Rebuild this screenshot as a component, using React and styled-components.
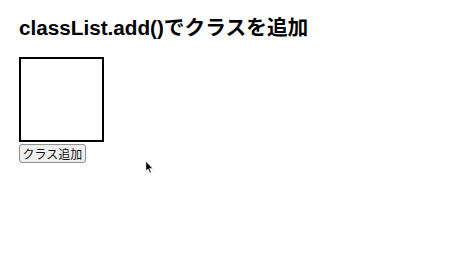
import React from 'react';
import styled, { createGlobalStyle } from 'styled-components';

const Global = createGlobalStyle`
  html, body {
    margin: 0;
    background: #fff;
  }
  body {
    font-family: "Liberation Sans", "Noto Sans CJK JP", sans-serif;
    color: #000;
  }
`;

const Page = styled.div`
  position: relative;
  width: 474px;
  height: 279px;
  padding: 15px 19px;
  box-sizing: border-box;
`;

const Title = styled.h1`
  margin: 0 0 16px;
  font-size: 20.7px;
  line-height: 26px;
  font-weight: 700;
`;

const Box = styled.div`
  width: 81px;
  height: 81px;
  border: 2px solid #000;
  margin-bottom: 2px;
`;

const Button = styled.button`
  display: block;
  box-sizing: border-box;
  width: 67px;
  height: 19px;
  padding: 0;
  font-family: "Noto Sans CJK JP", sans-serif;
  font-size: 12px;
  line-height: 17px;
  color: #111;
  background: #efefef;
  border: 1px solid #8f8f8f;
  border-radius: 3px;
`;

const Cursor = styled.svg`
  position: absolute;
  left: 145px;
  top: 160px;
`;

export default function App() {
  return (
    <Page>
      <Global />
      <Title>classList.add()でクラスを追加</Title>
      <Box />
      <Button>クラス追加</Button>
      <Cursor width="9" height="15" viewBox="0 0 10 16">
        <path d="M1 1 L1 12 L3.5 9.5 L5.5 14 L7 13.3 L5 9 L8.5 9 Z" fill="#000" stroke="#fff" strokeWidth="0.6" />
      </Cursor>
    </Page>
  );
}
